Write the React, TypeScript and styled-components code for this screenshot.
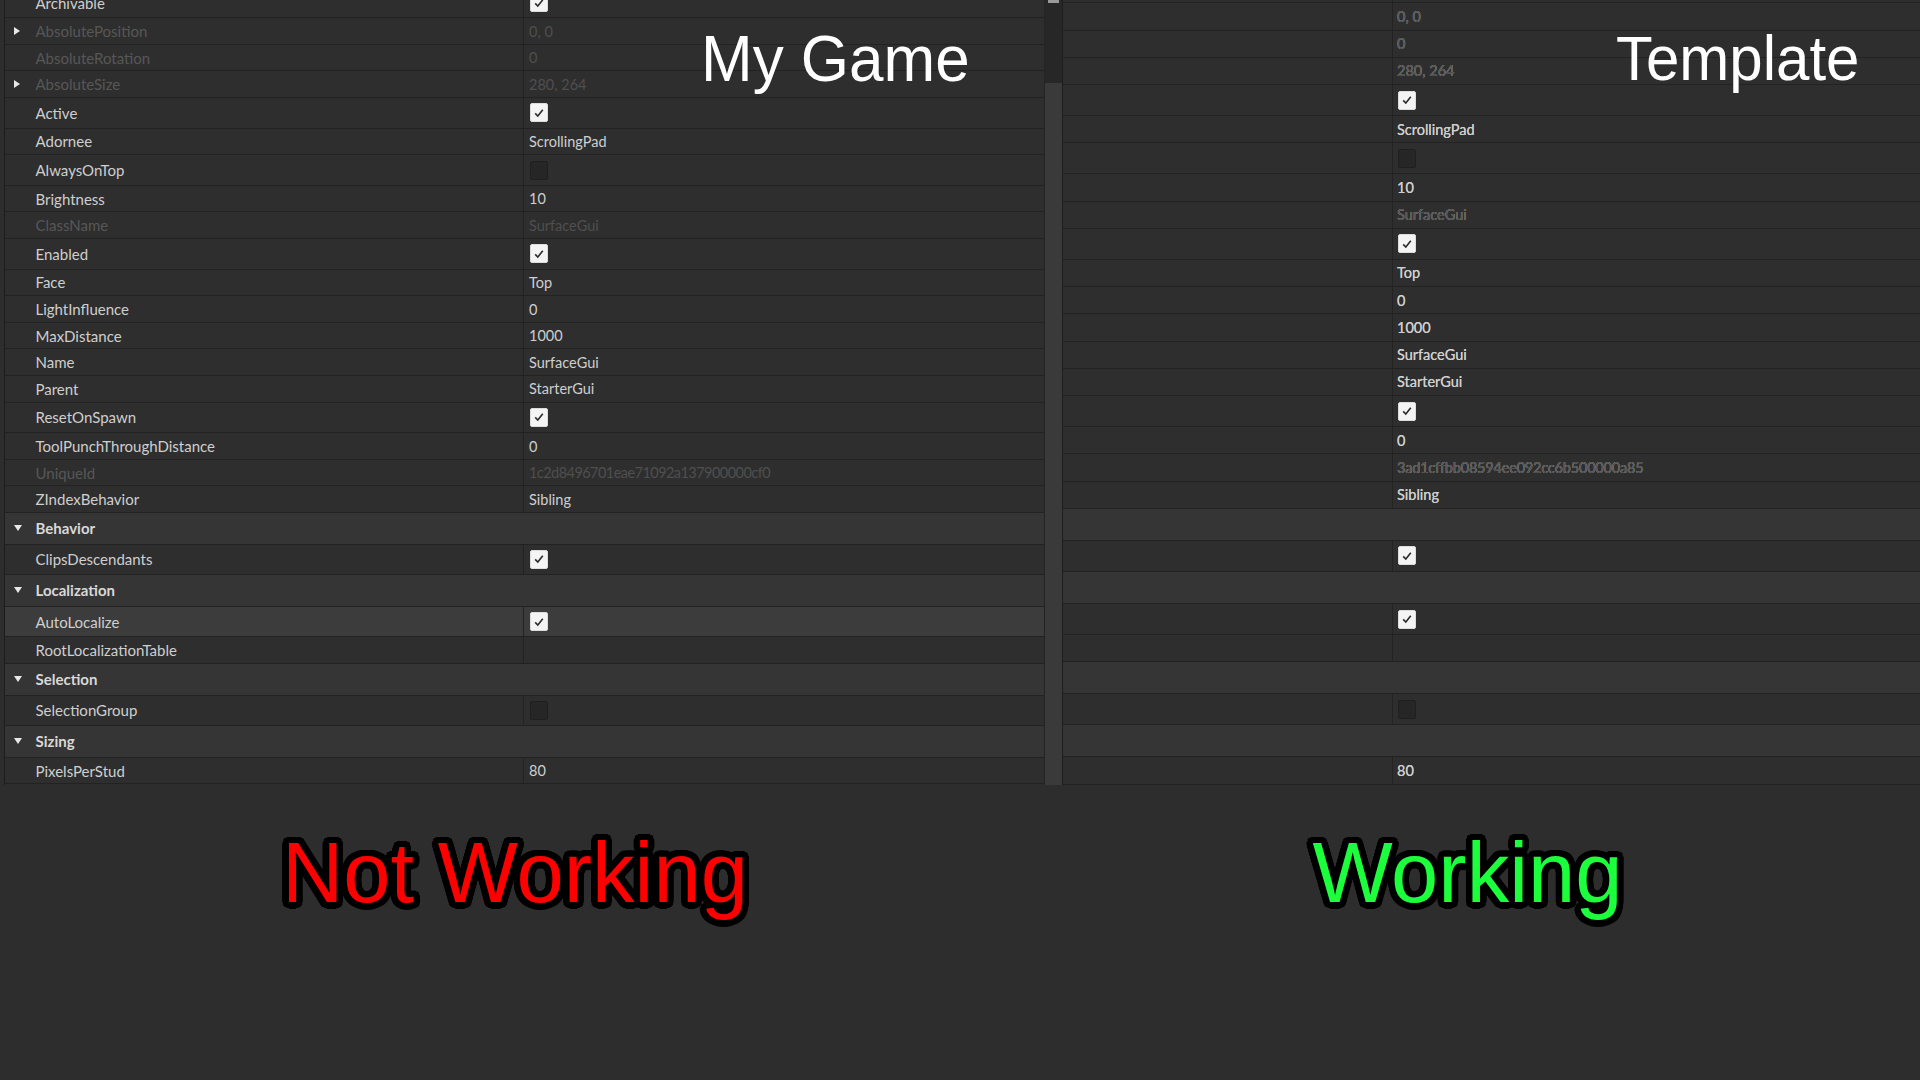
import React from 'react';
import styled, { createGlobalStyle } from 'styled-components';

type Kind = 'text' | 'check' | 'category';

type Prop = {
  kind: Kind;
  name: string;
  value?: string;
  other?: string;
  checked?: boolean;
  dim?: boolean;
  arrow?: boolean;
  hover?: boolean;
  id?: boolean;
};

const props: Prop[] = [
  { kind: 'check', name: 'Archivable', checked: true },
  { kind: 'text', name: 'AbsolutePosition', value: '0, 0', dim: true, arrow: true },
  { kind: 'text', name: 'AbsoluteRotation', value: '0', dim: true },
  { kind: 'text', name: 'AbsoluteSize', value: '280, 264', dim: true, arrow: true },
  { kind: 'check', name: 'Active', checked: true },
  { kind: 'text', name: 'Adornee', value: 'ScrollingPad' },
  { kind: 'check', name: 'AlwaysOnTop', checked: false },
  { kind: 'text', name: 'Brightness', value: '10' },
  { kind: 'text', name: 'ClassName', value: 'SurfaceGui', dim: true },
  { kind: 'check', name: 'Enabled', checked: true },
  { kind: 'text', name: 'Face', value: 'Top' },
  { kind: 'text', name: 'LightInfluence', value: '0' },
  { kind: 'text', name: 'MaxDistance', value: '1000' },
  { kind: 'text', name: 'Name', value: 'SurfaceGui' },
  { kind: 'text', name: 'Parent', value: 'StarterGui' },
  { kind: 'check', name: 'ResetOnSpawn', checked: true },
  { kind: 'text', name: 'ToolPunchThroughDistance', value: '0' },
  {
    kind: 'text',
    name: 'UniqueId',
    value: '1c2d8496701eae71092a137900000cf0',
    other: '3ad1cffbb08594ee092cc6b500000a85',
    dim: true,
    id: true,
  },
  { kind: 'text', name: 'ZIndexBehavior', value: 'Sibling' },
  { kind: 'category', name: 'Behavior' },
  { kind: 'check', name: 'ClipsDescendants', checked: true },
  { kind: 'category', name: 'Localization' },
  { kind: 'check', name: 'AutoLocalize', checked: true, hover: true },
  { kind: 'text', name: 'RootLocalizationTable', value: '' },
  { kind: 'category', name: 'Selection' },
  { kind: 'check', name: 'SelectionGroup', checked: false },
  { kind: 'category', name: 'Sizing' },
  { kind: 'text', name: 'PixelsPerStud', value: '80' },
];

const outline = (w: number) =>
  Array.from({ length: 32 }, (_, i) => {
    const a = (i / 32) * Math.PI * 2;
    return `${(Math.cos(a) * w).toFixed(1)}px ${(Math.sin(a) * w).toFixed(1)}px 0 #000`;
  }).join(', ');

const GlobalStyle = createGlobalStyle`
  html, body {
    margin: 0;
    padding: 0;
    background: #2d2d2d;
  }
  body {
    font-family: Lato, "Liberation Sans", sans-serif;
  }
`;

const Page = styled.div`
  width: 1920px;
  height: 1080px;
  display: flex;
  flex-direction: column;
  background: #2d2d2d;
  overflow: hidden;
`;

const Panels = styled.div`
  display: flex;
  height: 785px;
`;

const Panel = styled.div<{ $w?: number }>`
  position: relative;
  height: 785px;
  overflow: hidden;
  box-sizing: border-box;
  border-left: 1px solid #1d1d1d;
  ${(p) => (p.$w ? `width: ${p.$w}px; margin-left: 4px;` : 'flex: 1;')}
  background: #2d2d2d;
`;

const List = styled.div<{ $offset: number }>`
  display: flex;
  flex-direction: column;
  margin-top: ${(p) => p.$offset}px;
`;

const Row = styled.div<{ $h: number; $nameW: number; $cat?: boolean; $hover?: boolean }>`
  display: grid;
  grid-template-columns: ${(p) => p.$nameW}px 1fr;
  height: ${(p) => p.$h}px;
  flex: none;
  box-sizing: border-box;
  border-bottom: 1px solid #222222;
  background: ${(p) => (p.$hover ? '#3c3c3c' : p.$cat ? '#353535' : '#2e2e2e')};
`;

const NameCell = styled.div<{ $cat?: boolean; $dim?: boolean }>`
  display: flex;
  align-items: center;
  padding-left: 9px;
  font-size: 15px;
  font-weight: ${(p) => (p.$cat ? 700 : 400)};
  color: ${(p) => (p.$dim ? '#575757' : p.$cat ? '#d8d8d8' : '#cfcfcf')};
  white-space: nowrap;
  overflow: hidden;
`;

const ArrowBox = styled.span`
  width: 21.5px;
  flex: none;
  display: flex;
  align-items: center;
`;

const Arrow = styled.span<{ $down?: boolean }>`
  width: 0;
  height: 0;
  ${(p) =>
    p.$down
      ? `border-left: 4.5px solid transparent; border-right: 4.5px solid transparent; border-top: 6px solid #e8e8e8;`
      : `border-top: 4.5px solid transparent; border-bottom: 4.5px solid transparent; border-left: 6px solid #e8e8e8;`}
`;

const ValueCell = styled.div<{
  $cat?: boolean;
  $dim?: boolean;
  $pad: number;
  $heavy?: boolean;
  $squeeze: number;
}>`
  display: flex;
  align-items: center;
  padding-left: ${(p) => p.$pad}px;
  border-left: 1px solid ${(p) => (p.$cat ? 'transparent' : '#232323')};
  font-size: 14.5px;
  letter-spacing: ${(p) => p.$squeeze}px;
  color: ${(p) => (p.$dim ? '#4f4f4f' : '#cfcfcf')};
  white-space: nowrap;
  ${(p) => (p.$heavy ? 'text-shadow: 0 0 0.6px #cfcfcf;' : '')}
`;

const Box = styled.span<{ $on?: boolean }>`
  width: 18px;
  height: 19px;
  margin-left: 1px;
  box-sizing: border-box;
  border-radius: 2px;
  display: flex;
  align-items: center;
  justify-content: center;
  background: ${(p) => (p.$on ? '#f4f4f4' : '#262626')};
  border: 1px solid ${(p) => (p.$on ? '#dcdcdc' : '#1f1f1f')};
`;

const Scrollbar = styled.div`
  width: 18px;
  height: 785px;
  display: flex;
  flex-direction: column;
  background: #3a3a3a;
  box-sizing: border-box;
  border-left: 1px solid #242424;
`;

const Track = styled.div`
  height: 83px;
  background: #272727;
  display: flex;
  justify-content: center;
`;

const UpNub = styled.span`
  width: 11px;
  height: 3px;
  background: #9a9a9a;
`;

const Title = styled.div<{ $left: number; $top: number; $size: number }>`
  position: absolute;
  left: ${(p) => p.$left}px;
  top: ${(p) => p.$top}px;
  font-family: "Liberation Sans", Arial, sans-serif;
  font-size: ${(p) => p.$size}px;
  line-height: 1;
  color: #ffffff;
  transform: scaleY(1.05);
  transform-origin: top left;
  white-space: nowrap;
`;

const Captions = styled.div`
  display: grid;
  grid-template-columns: 1044px 1fr;
  margin-top: 45px;
`;

const Caption = styled.div<{ $color: string; $shift: number }>`
  text-align: center;
  padding-right: ${(p) => p.$shift}px;
  font-family: "Liberation Sans", Arial, sans-serif;
  font-size: 85px;
  line-height: 1;
  color: ${(p) => p.$color};
  white-space: nowrap;
  text-shadow: ${outline(6.5)}, ${outline(4)}, 3px 4px 3px #111;
`;

const Check = () => (
  <svg width="12" height="12" viewBox="0 0 12 12">
    <path d="M2.2 6.4 L4.8 9 L9.8 2.8" fill="none" stroke="#2c2c2c" strokeWidth="1.6" />
  </svg>
);

type PanelProps = {
  template?: boolean;
};

const PropertyList = ({ template }: PanelProps) => {
  const scale = template ? { text: 27.25, check: 31, category: 32.1 } : { text: 26.6, check: 30.6, category: 31.6 };
  const nameW = template ? 329 : 518;
  return (
    <List $offset={template ? -27.7 : -12.3}>
      {props.map((p) => {
        const cat = p.kind === 'category';
        const value = template && p.other ? p.other : p.value;
        const squeeze = p.id ? (template ? -0.2 : -0.55) : 0;
        return (
          <Row
            key={p.name}
            $h={scale[p.kind]}
            $nameW={nameW}
            $cat={cat}
            $hover={!template && p.hover}
          >
            <NameCell $cat={cat} $dim={p.dim}>
              {!template && (
                <>
                  <ArrowBox>
                    {cat && <Arrow $down />}
                    {p.arrow && <Arrow />}
                  </ArrowBox>
                  {p.name}
                </>
              )}
            </NameCell>
            <ValueCell
              $cat={cat}
              $dim={p.dim}
              $pad={template ? 4 : 5}
              $heavy={template}
              $squeeze={squeeze}
            >
              {p.kind === 'check' && <Box $on={p.checked}>{p.checked && <Check />}</Box>}
              {p.kind === 'text' && value}
            </ValueCell>
          </Row>
        );
      })}
    </List>
  );
};

export default function App() {
  return (
    <Page>
      <GlobalStyle />
      <Panels>
        <Panel $w={1040}>
          <PropertyList />
          <Title $left={696} $top={26} $size={62}>
            My Game
          </Title>
        </Panel>
        <Scrollbar>
          <Track>
            <UpNub />
          </Track>
        </Scrollbar>
        <Panel>
          <PropertyList template />
          <Title $left={553} $top={28} $size={60}>
            Template
          </Title>
        </Panel>
      </Panels>
      <Captions>
        <Caption $color="#ff0000" $shift={14}>
          Not Working
        </Caption>
        <Caption $color="#1cff3c" $shift={29}>
          Working
        </Caption>
      </Captions>
    </Page>
  );
}
